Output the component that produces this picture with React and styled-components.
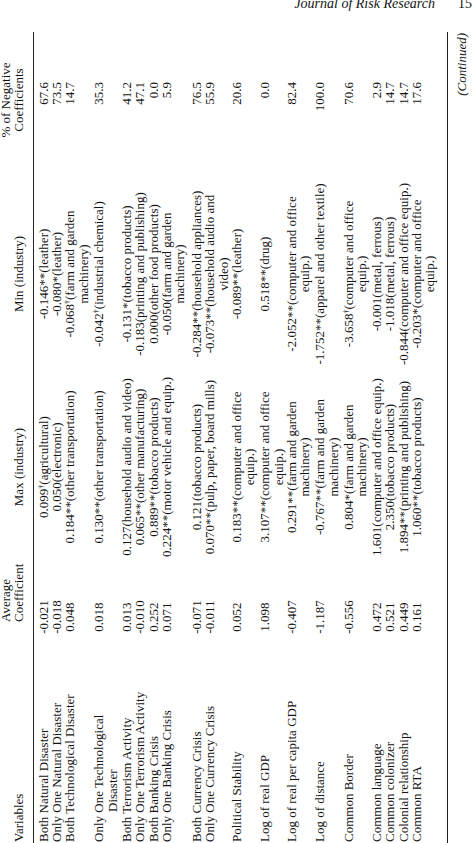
import React from 'react'
import styled, { createGlobalStyle } from 'styled-components'

const GlobalStyle = createGlobalStyle`
	html, body {
		margin: 0;
		padding: 0;
		background: #fff;
		overflow: hidden;
	}
	body {
		font-family: "Liberation Serif", "Times New Roman", serif;
		color: #141414;
	}
`;

const Page = styled.div`
	display: flex;
	flex-direction: column;
	width: 474px;
	height: 843px;
	overflow: hidden;
	background: #fff;
`;

const RunningHead = styled.div`
	display: flex;
	justify-content: flex-end;
	gap: 23px;
	height: 14px;
	margin-top: -3px;
	padding-right: 2px;
	font-size: 14px;
	line-height: 14px;
	white-space: nowrap;
`;

const Journal = styled.span`
	font-style: italic;
`;

// the whole table is set landscape, so it is turned a quarter to the left
const Sheet = styled.div`
	flex: none;
	width: 815px;
	font-size: 13px;
	line-height: 13.33px;
	transform-origin: 0 0;
	transform: translate(-8px, 836px) rotate(-90deg);
`;

const Table = styled.div`
	border-top: 1px solid #222;
	border-bottom: 1px solid #222;
`;

const Row = styled.div`
	display: grid;
	grid-template-columns: 195px 88.5px 193px 193px 1fr;
	white-space: nowrap;
`;

const HeadRow = styled(Row)`
	align-items: end;
	padding: 6px 0 7.3px;
	border-bottom: 1px solid #222;
`;

const Body = styled.div`
	padding: 2.8px 0 10.6px;
`;

const BodyRow = styled(Row)`
	align-items: start;
	padding-bottom: ${p => p.$gap || 0}px;
`;

const VarCell = styled.div`
	padding-left: 5px;
	text-align: left;
`;

const AvgHead = styled.div`
	padding-left: 30px;
	text-align: left;
`;

const AvgCell = styled.div`
	padding-right: 18.5px;
	text-align: center;
`;

const IndustryCell = styled.div`
	text-align: center;
`;

const PctHead = styled.div`
	padding-left: 9.5px;
	text-align: center;
`;

const PctCell = styled.div`
	padding-right: 50px;
	text-align: right;
`;

const Line = styled.span`
	display: block;
	padding-left: ${p => p.$indent || 0}px;
`;

const Sup = styled.sup`
	font-size: 8px;
	line-height: 0;
	vertical-align: 4px;
`;

const Continued = styled.div`
	margin-top: 6.8px;
	padding-right: 1px;
	text-align: right;
	font-style: italic;
`;

const rows = [
	{ v: ['Both Natural Disaster'], avg: '-0.021', max: ['0.099†(agricultural)'], min: ['-0.146**(leather)'], pct: '67.6' },
	{ v: ['Only One Natural Disaster'], avg: '-0.018', max: ['0.050(electronic)'], min: ['-0.080*(leather)'], pct: '73.5' },
	{ v: ['Both Technological Disaster'], avg: '0.048', max: ['0.184**(other transportation)'], min: ['-0.068†(farm and garden', 'machinery)'], pct: '14.7', gap: 2.4 },
	{ v: ['Only One Technological', 'Disaster'], avg: '0.018', max: ['0.130**(other transportation)'], min: ['-0.042†(industrial chemical)'], pct: '35.3', gap: 1 },
	{ v: ['Both Terrorism Activity'], avg: '0.013', max: ['0.127(household audio and video)'], min: ['-0.131*(tobacco products)'], pct: '41.2' },
	{ v: ['Only One Terrorism Activity'], avg: '-0.010', max: ['0.065**(other manufacturing)'], min: ['-0.183(printing and publishing)'], pct: '47.1' },
	{ v: ['Both Banking Crisis'], avg: '0.252', max: ['0.889**(tobacco products)'], min: ['0.000(other food products)'], pct: '0.0' },
	{ v: ['Only One Banking Crisis'], avg: '0.071', max: ['0.224**(motor vehicle and equip.)'], min: ['-0.050(farm and garden', 'machinery)'], pct: '5.9', gap: 3.3 },
	{ v: ['Both Currency Crisis'], avg: '-0.071', max: ['0.121(tobacco products)'], min: ['-0.284**(household appliances)'], pct: '76.5' },
	{ v: ['Only One Currency Crisis'], avg: '-0.011', max: ['0.070**(pulp, paper, board mills)'], min: ['-0.073**(household audio and', 'video)'], pct: '55.9' },
	{ v: ['Political Stability'], avg: '0.052', max: ['0.183**(computer and office', 'equip.)'], min: ['-0.089**(leather)'], pct: '20.6', gap: 1.6 },
	{ v: ['Log of real GDP'], avg: '1.098', max: ['3.107**(computer and office', 'equip.)'], min: ['0.518**(drug)'], pct: '0.0' },
	{ v: ['Log of real per capita GDP'], avg: '-0.407', max: ['0.291**(farm and garden', 'machinery)'], min: ['-2.052**(computer and office', 'equip.)'], pct: '82.4', gap: 1.7 },
	{ v: ['Log of distance'], avg: '-1.187', max: ['-0.767**(farm and garden', 'machinery)'], min: ['-1.752**(apparel and other textile)'], pct: '100.0', gap: 1.7 },
	{ v: ['Common Border'], avg: '-0.556', max: ['0.804*(farm and garden', 'machinery)'], min: ['-3.658†(computer and office', 'equip.)'], pct: '70.6', gap: 1.7 },
	{ v: ['Common language'], avg: '0.472', max: ['1.601(computer and office equip.)'], min: ['-0.001(metal, ferrous)'], pct: '2.9' },
	{ v: ['Common colonizer'], avg: '0.521', max: ['2.350(tobacco products)'], min: ['-1.018(metal, ferrous)'], pct: '14.7' },
	{ v: ['Colonial relationship'], avg: '0.449', max: ['1.894**(printing and publishing)'], min: ['-0.844(computer and office equip.)'], pct: '14.7' },
	{ v: ['Common RTA'], avg: '0.161', max: ['1.060**(tobacco products)'], min: ['-0.203*(computer and office', 'equip.)'], pct: '17.6' },
];

// a dagger after the value is set as a small superscript
function withDagger(text) {
	const parts = text.split('†');
	if (parts.length == 1)
		return text;
	return (
		<>
			{parts[0]}<Sup>†</Sup>{parts[1]}
		</>
	);
}

function Lines({ list, indent }) {
	return list.map((t, i) => (
		<Line key={i} $indent={i > 0 ? indent : 0}>{withDagger(t)}</Line>
	));
}

function TableRow({ row }) {
	return (
		<BodyRow $gap={row.gap}>
			<VarCell><Lines list={row.v} indent={30} /></VarCell>
			<AvgCell>{row.avg}</AvgCell>
			<IndustryCell><Lines list={row.max} /></IndustryCell>
			<IndustryCell><Lines list={row.min} /></IndustryCell>
			<PctCell>{row.pct}</PctCell>
		</BodyRow>
	);
}

export default function App() {
	return (
		<Page>
			<GlobalStyle />
			<RunningHead>
				<Journal>Journal of Risk Research</Journal>
				<span>15</span>
			</RunningHead>
			<Sheet>
				<Table>
					<HeadRow>
						<VarCell>Variables</VarCell>
						<AvgHead><Line>Average</Line><Line>Coefficient</Line></AvgHead>
						<IndustryCell>Max (industry)</IndustryCell>
						<IndustryCell>Min (industry)</IndustryCell>
						<PctHead><Line>% of Negative</Line><Line>Coefficients</Line></PctHead>
					</HeadRow>
					<Body>
						{rows.map((r, i) => <TableRow key={i} row={r} />)}
					</Body>
				</Table>
				<Continued>(Continued)</Continued>
			</Sheet>
		</Page>
	);
}
